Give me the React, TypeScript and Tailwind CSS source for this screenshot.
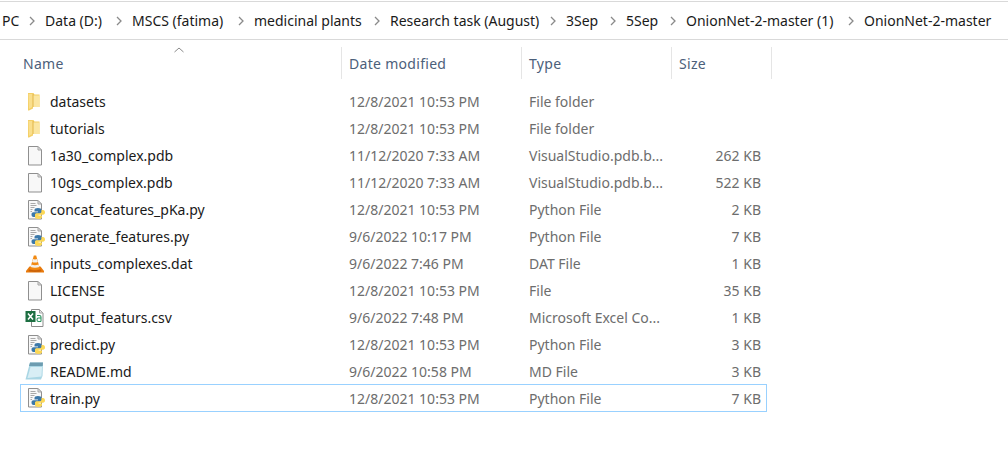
import type { ReactNode } from 'react'

const crumbs = [
  { label: 'PC', w: 'w-[17px]' },
  { label: 'Data (D:)', w: 'w-[61px]' },
  { label: 'MSCS (fatima)', w: 'w-[96px]' },
  { label: 'medicinal plants', w: 'w-[110px]' },
  { label: 'Research task (August)', w: 'w-[150px]' },
  { label: '3Sep', w: 'w-[34px]' },
  { label: '5Sep', w: 'w-[34px]' },
  { label: 'OnionNet-2-master (1)', w: 'w-[152px]' },
  { label: 'OnionNet-2-master', w: 'w-[129px]' },
]

type Kind = 'folder' | 'blank' | 'python' | 'vlc' | 'excel' | 'notepad'

const files: { name: string; date: string; type: string; size: string; icon: Kind }[] = [
  { name: 'datasets', date: '12/8/2021 10:53 PM', type: 'File folder', size: '', icon: 'folder' },
  { name: 'tutorials', date: '12/8/2021 10:53 PM', type: 'File folder', size: '', icon: 'folder' },
  { name: '1a30_complex.pdb', date: '11/12/2020 7:33 AM', type: 'VisualStudio.pdb.b...', size: '262 KB', icon: 'blank' },
  { name: '10gs_complex.pdb', date: '11/12/2020 7:33 AM', type: 'VisualStudio.pdb.b...', size: '522 KB', icon: 'blank' },
  { name: 'concat_features_pKa.py', date: '12/8/2021 10:53 PM', type: 'Python File', size: '2 KB', icon: 'python' },
  { name: 'generate_features.py', date: '9/6/2022 10:17 PM', type: 'Python File', size: '7 KB', icon: 'python' },
  { name: 'inputs_complexes.dat', date: '9/6/2022 7:46 PM', type: 'DAT File', size: '1 KB', icon: 'vlc' },
  { name: 'LICENSE', date: '12/8/2021 10:53 PM', type: 'File', size: '35 KB', icon: 'blank' },
  { name: 'output_featurs.csv', date: '9/6/2022 7:48 PM', type: 'Microsoft Excel Co...', size: '1 KB', icon: 'excel' },
  { name: 'predict.py', date: '12/8/2021 10:53 PM', type: 'Python File', size: '3 KB', icon: 'python' },
  { name: 'README.md', date: '9/6/2022 10:58 PM', type: 'MD File', size: '3 KB', icon: 'notepad' },
  { name: 'train.py', date: '12/8/2021 10:53 PM', type: 'Python File', size: '7 KB', icon: 'python' },
]

function Sheet({ children }: { children?: ReactNode }) {
  return (
    <svg width="20" height="20" viewBox="0 0 20 20" fill="none">
      <path d="M3.500 0.500h9.500l3.500 3.500v15h-13z" fill="#f8f8f8" stroke="#8f8f8f" />
      <path d="M13 0.500v3.500h3.500z" fill="#e4e4e4" stroke="#a5a5a5" />
      {children}
    </svg>
  )
}

function FileIcon({ kind }: { kind: Kind }) {
  if (kind === 'folder') {
    return (
      <svg width="20" height="20" viewBox="0 0 20 20">
        <path d="M3 1h5.500l1 1.500h5V15H8v1.500L4 18.500H3z" fill="#f4cf66" />
        <path d="M8 3.500h6.500V15H8z" fill="#fbe6a2" />
        <path d="M3.500 2h4.500v12.500L4 17z" fill="#fadf8c" />
        <path d="M7.500 2h1v13h-1z" fill="#e2b548" />
      </svg>
    )
  }
  if (kind === 'blank') return <Sheet />
  if (kind === 'python') {
    return (
      <Sheet>
        <path d="M5.500 3.500h5M5.500 5.500h6M5.500 7.500h4M5.500 9.500h2M5.500 11.500h1.500" stroke="#a9a9a9" />
        <path d="M13 8c-2.500 0-3.500.7-3.500 2v1.500H13v.8H8.500c-1.200 0-2 .8-2 2.200s.6 2.500 2 2.500H10v-1.500c0-1 .8-1.800 2-1.800h3c.8 0 1.500-.7 1.500-1.500V10c0-1.200-1.200-2-3.500-2z" fill="#3b78a9" />
        <path d="M13.500 19c2.500 0 3.500-.7 3.500-2v-1.500h-3.500v-.8H18c1.200 0 2-.8 2-2.200s-.6-2.500-2-2.500h-1.500v1.500c0 1-.8 1.800-2 1.800h-3c-.8 0-1.500.7-1.500 1.500V17c0 1.200 1.200 2 3.500 2z" fill="#fcd856" />
      </Sheet>
    )
  }
  if (kind === 'vlc') {
    return (
      <svg width="20" height="20" viewBox="0 0 20 20">
        <path d="M4.500 12.500h11l3.500 4.500v1.500H1V17z" fill="#e87a0c" />
        <path d="M4.500 15.500c2.500 1 8.500 1 11 0l1 1.500c-3 1.200-10 1.200-13 0z" fill="#c9620a" />
        <path d="M8.800 1.500h2.400l3.800 13.500c-2 1-8 1-10 0z" fill="#f28a12" />
        <path d="M8 5c1.200.6 2.800.6 4 0l.9 3c-1.500.8-4.300.8-5.800 0zM6.400 10.500c2 .9 5.200.9 7.200 0l.7 2.500c-2.400 1-6.200 1-8.600 0z" fill="#f4f1ea" />
      </svg>
    )
  }
  if (kind === 'excel') {
    return (
      <svg width="20" height="20" viewBox="0 0 20 20">
        <path d="M6.500 1.500h8l3.500 3.500v13.500H6.500z" fill="#fff" stroke="#8c8c8c" />
        <path d="M14.500 1.500V5H18z" fill="#e6e6e6" stroke="#a5a5a5" />
        <rect x="0.500" y="3" width="10" height="11" fill="#1d6f42" />
        <path d="M3 5.500l5 6M8 5.500l-5 6" stroke="#fff" strokeWidth="1.500" />
        <path d="M12 7.500h2.500c1 0 1.500.6 1.500 1.500v4.500M16 10h-2.500c-1 0-1.500.6-1.500 1.700s.5 1.800 1.500 1.800H16" fill="none" stroke="#2a9460" strokeWidth="1.100" />
      </svg>
    )
  }
  return (
    <svg width="20" height="20" viewBox="0 0 20 20">
      <path d="M5 0.500h13l-.5 13.500-1.500 3.500H0.500z" fill="#a9d6e4" />
      <path d="M5 0.500h13l-.3 3.500H4z" fill="#6d9cb0" />
      <path d="M5.500 5h11.500l-.5 9.500L2.500 16z" fill="#d8eef5" />
    </svg>
  )
}

function Chevron() {
  return (
    <svg width="8" height="10" viewBox="0 0 8 10" fill="none" className="shrink-0">
      <path d="M2 1l4 4-4 4" stroke="#8a8a8a" strokeWidth="1.300" />
    </svg>
  )
}

function HeaderCell({ label, className }: { label: string; className: string }) {
  return (
    <div className={`h-8 flex items-center border-r border-[#e5e5e5] text-[#4c607a] tracking-[0.3px] ${className}`}>
      {label}
    </div>
  )
}

export default function App() {
  return (
    <div className="w-[1008px] h-[457px] overflow-hidden bg-white pt-px text-[14px] font-['Noto_Sans','Open_Sans',sans-serif]">
      <div className="h-[39px] flex items-center gap-[9px] pl-[2px] border-y border-[#d9d9d9] text-[#1a1a1a] whitespace-nowrap">
        {crumbs.map((c, i) => (
          <div key={c.label} className="flex items-center gap-[9px]">
            {i > 0 && <Chevron />}
            <span className={c.w}>{c.label}</span>
          </div>
        ))}
      </div>

      <div className="relative pl-[15px] pt-[7px]">
        <svg width="10" height="6" viewBox="0 0 10 6" fill="none" className="absolute left-[174px] top-[7px]">
          <path d="M0.500 5l4.500-4 4.500 4" stroke="#8a8a8a" />
        </svg>
        <div className="flex">
          <HeaderCell label="Name" className="w-[327px] pl-2" />
          <HeaderCell label="Date modified" className="w-[180px] pl-[7px]" />
          <HeaderCell label="Type" className="w-[150px] pl-[7px]" />
          <HeaderCell label="Size" className="w-[100px] pl-[7px]" />
        </div>

        <div className="mt-[9px] ml-[5px] w-[747px]">
          {files.map((f, i) => {
            const last = i === files.length - 1
            return (
              <div
                key={f.name}
                className={`flex items-center whitespace-nowrap border ${last ? 'h-[28px] -mt-px border-[#99d1ff]' : 'h-[27px] border-transparent'}`}
              >
                <div className="w-[29px] pl-1 shrink-0">
                  <FileIcon kind={f.icon} />
                </div>
                <div className="w-[299px] shrink-0 text-[#1a1a1a]">{f.name}</div>
                <div className="w-[180px] shrink-0 text-[#6d6d6d]">{f.date}</div>
                <div className="w-[150px] shrink-0 text-[#6d6d6d]">{f.type}</div>
                <div className="w-[82px] shrink-0 text-right text-[#6d6d6d]">{f.size}</div>
              </div>
            )
          })}
        </div>
      </div>
    </div>
  )
}
